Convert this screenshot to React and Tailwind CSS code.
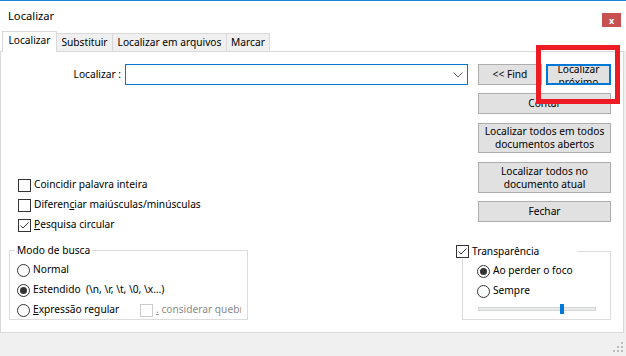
import React from "react";

function CheckBox({ checked, disabled }) {
  return (
    <span
      className={`flex h-[13px] w-[13px] shrink-0 items-center justify-center border bg-white ${
        disabled ? "border-[#cccccc]" : "border-[#333333]"
      }`}
    >
      {checked && (
        <svg width="11" height="11" viewBox="0 0 11 11">
          <polyline points="1.5,5.5 4,8 9.5,2.5" fill="none" stroke="#333333" strokeWidth="1" />
        </svg>
      )}
    </span>
  );
}

function Radio({ checked }) {
  return (
    <span className="flex h-[13px] w-[13px] shrink-0 items-center justify-center rounded-full border border-[#333333] bg-white">
      {checked && <span className="h-[7px] w-[7px] rounded-full bg-[#333333]" />}
    </span>
  );
}

function Button({ children, className = "", focused }) {
  return (
    <div
      className={`flex items-center justify-center overflow-hidden bg-[#e1e1e1] text-center leading-[13px] ${
        focused ? "border-2 border-[#0078d7]" : "border border-[#adadad]"
      } ${className}`}
    >
      {children}
    </div>
  );
}

const tabs = [
  { label: "Substituir", w: "w-[56px]" },
  { label: "Localizar em arquivos", w: "w-[114px]" },
  { label: "Marcar", w: "w-[43px]" },
];

export default function App() {
  return (
    <div className="relative h-[356px] w-[626px] overflow-hidden bg-[#f0f0f0] font-['Noto_Sans',sans-serif] text-[10.2px] text-black">
      <div className="h-px bg-[#1883d7]" />

      {/* title bar */}
      <div className="flex h-[30px] items-start justify-between bg-white pl-[8px] pr-[5px]">
        <span className="mt-[7px] text-[11.2px]">Localizar</span>
        <div className="mt-[12px] flex h-[14px] w-[19px] items-center justify-center bg-[#c75050] text-[9px] font-bold leading-none text-white">
          x
        </div>
      </div>

      {/* tabs */}
      <div className="flex h-[20px] items-end bg-white pl-[2px]">
        <div className="relative z-10 -mb-px flex h-[21px] w-[55px] items-center justify-center border border-b-0 border-[#d9d9d9] bg-white pb-[3px]">
          Localizar
        </div>
        {tabs.map((t) => (
          <div
            key={t.label}
            className={`flex h-[18px] ${t.w} items-center justify-center border border-l-0 border-b-0 border-[#d9d9d9] bg-[#f0f0f0]`}
          >
            {t.label}
          </div>
        ))}
      </div>

      {/* panel */}
      <div className="flex h-[282px] w-[624px] border border-[#d9d9d9] bg-white pt-[12px]">
        {/* left column */}
        <div className="w-[461px] shrink-0">
          <div className="flex h-[21px] items-center">
            <span className="w-[120px] shrink-0 text-right">Localizar :</span>
            <div className="ml-[4px] flex h-[21px] w-[343px] shrink-0 items-center justify-end border border-[#0078d7] pr-[4px]">
              <svg width="10" height="6" viewBox="0 0 10 6">
                <polyline points="0.5,0.5 5,5 9.5,0.5" fill="none" stroke="#606060" strokeWidth="1" />
              </svg>
            </div>
          </div>

          <div className="mt-[90px] pl-[17px]">
            <div className="flex h-[20px] items-center gap-[3px]">
              <CheckBox />
              <span>Coincidir palavra inteira</span>
            </div>
            <div className="flex h-[20px] items-center gap-[3px]">
              <CheckBox />
              <span>
                Diferen<span className="underline">c</span>iar maiúsculas/minúsculas
              </span>
            </div>
            <div className="flex h-[20px] items-center gap-[3px]">
              <CheckBox checked />
              <span>
                <span className="underline">P</span>esquisa circular
              </span>
            </div>
          </div>

          <div className="relative ml-[8px] mt-[15px] h-[70px] w-[239px] border border-[#dcdcdc] pl-[7px] pt-[9px]">
            <span className="absolute -top-[8px] left-[5px] bg-white px-[2px] leading-[14px]">Modo de busca</span>
            <div className="flex h-[20px] items-center gap-[3px]">
              <Radio />
              <span>Normal</span>
            </div>
            <div className="flex h-[20px] items-center gap-[3px]">
              <Radio checked />
              <span className="whitespace-pre">Estendido  (\n, \r, \t, \0, \x…)</span>
            </div>
            <div className="flex h-[20px] items-center">
              <Radio />
              <span className="ml-[3px] w-[107px] shrink-0">
                <span className="underline">E</span>xpressão regular
              </span>
              <CheckBox disabled />
              <span className="ml-[3px] w-[85px] overflow-hidden whitespace-nowrap text-[#8a8a8a]">
                <span className="underline">.</span> considerar quebra de linha
              </span>
            </div>
          </div>
        </div>

        {/* right column */}
        <div className="w-[149px] shrink-0">
          <div className="pl-[16px]">
            <div className="flex h-[21px] gap-[4px]">
              <Button className="h-[21px] w-[64px]">&lt;&lt; Find</Button>
              <Button className="h-[21px] w-[65px] pt-[3px]" focused>
                Localizar
                <br />
                próximo
              </Button>
            </div>
            <Button className="mt-[8px] h-[21px] w-[133px]">Contar</Button>
            <Button className="mt-[9px] h-[30px] w-[133px]">
              Localizar todos em todos
              <br />
              documentos abertos
            </Button>
            <Button className="mt-[9px] h-[31px] w-[133px]">
              Localizar todos no
              <br />
              documento atual
            </Button>
            <Button className="mt-[8px] h-[21px] w-[133px]">Fechar</Button>
          </div>

          <div className="relative mt-[29px] h-[69px] w-[149px] border border-[#dcdcdc] pl-[14px] pt-[9px]">
            <div className="absolute -left-[8px] -top-[8px] flex h-[15px] w-[122px] items-center gap-[3px] bg-white pl-[1px]">
              <CheckBox checked />
              <span>Transparência</span>
            </div>
            <div className="flex h-[20px] items-center gap-[3px]">
              <Radio checked />
              <span>Ao perder o foco</span>
            </div>
            <div className="flex h-[20px] items-center gap-[3px]">
              <Radio />
              <span>Sempre</span>
            </div>
            <div className="relative ml-[1px] mt-[6px] h-[4px] w-[118px] border border-[#d6d6d6] bg-[#e7eaea]">
              <span className="absolute -top-[4px] left-[81px] h-[10px] w-[4px] bg-[#0078d7]" />
            </div>
          </div>
        </div>
      </div>

      {/* resize grip */}
      <svg className="absolute bottom-[3px] right-[2px]" width="11" height="11" viewBox="0 0 11 11">
        <g fill="#bcbcbc">
          <rect x="8" y="0" width="2" height="2" />
          <rect x="4" y="4" width="2" height="2" />
          <rect x="8" y="4" width="2" height="2" />
          <rect x="0" y="8" width="2" height="2" />
          <rect x="4" y="8" width="2" height="2" />
          <rect x="8" y="8" width="2" height="2" />
        </g>
      </svg>

      {/* annotation */}
      <div className="pointer-events-none absolute left-[536px] top-[45px] h-[59px] w-[84px] border-[5px] border-[#ed1c24]" />
    </div>
  );
}
